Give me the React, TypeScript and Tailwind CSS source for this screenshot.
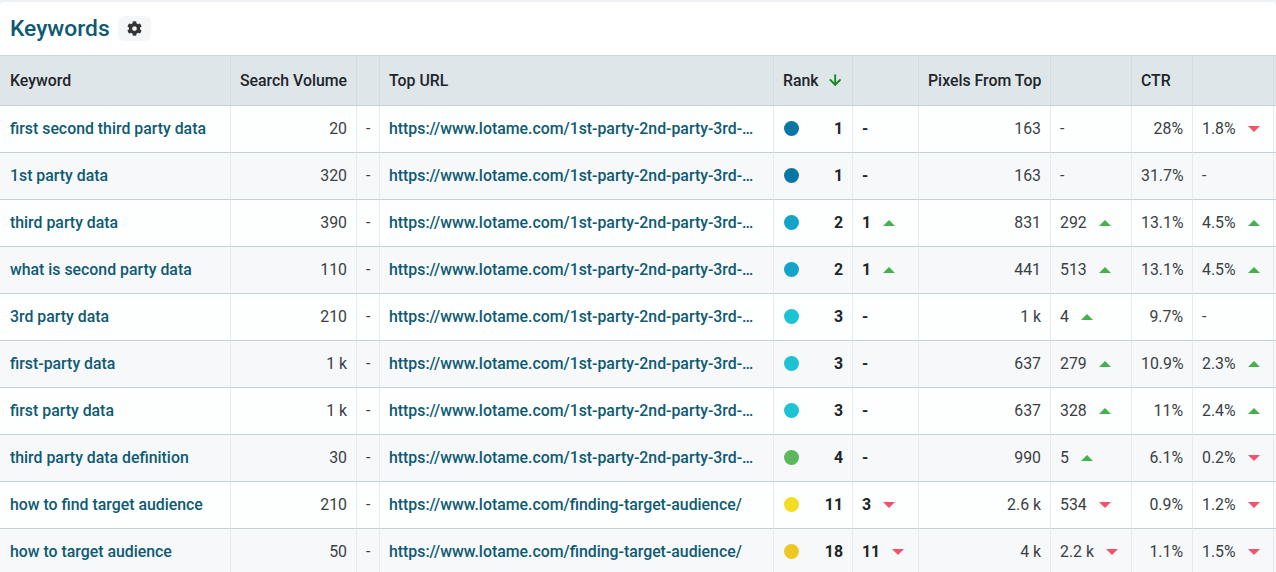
import React from 'react';
import { FaCog } from 'react-icons/fa';
import { ArrowDown } from 'lucide-react';

const LONG_URL = 'https://www.lotame.com/1st-party-2nd-party-3rd-party-data-what-is-it/';
const AUDIENCE_URL = 'https://www.lotame.com/finding-target-audience/';

type Delta = { v: string; dir?: 'up' | 'down' };

interface Row {
  keyword: string;
  volume: string;
  url: string;
  dot: string;
  rank: number;
  rankDelta: Delta;
  pixels: string;
  pixelsDelta: Delta;
  ctr: string;
  ctrDelta: Delta;
}

const rows: Row[] = [
  { keyword: 'first second third party data', volume: '20', url: LONG_URL, dot: 'bg-[#0b75a3]', rank: 1, rankDelta: { v: '-' }, pixels: '163', pixelsDelta: { v: '-' }, ctr: '28%', ctrDelta: { v: '1.8%', dir: 'down' } },
  { keyword: '1st party data', volume: '320', url: LONG_URL, dot: 'bg-[#0b75a3]', rank: 1, rankDelta: { v: '-' }, pixels: '163', pixelsDelta: { v: '-' }, ctr: '31.7%', ctrDelta: { v: '-' } },
  { keyword: 'third party data', volume: '390', url: LONG_URL, dot: 'bg-[#12a5c9]', rank: 2, rankDelta: { v: '1', dir: 'up' }, pixels: '831', pixelsDelta: { v: '292', dir: 'up' }, ctr: '13.1%', ctrDelta: { v: '4.5%', dir: 'up' } },
  { keyword: 'what is second party data', volume: '110', url: LONG_URL, dot: 'bg-[#12a5c9]', rank: 2, rankDelta: { v: '1', dir: 'up' }, pixels: '441', pixelsDelta: { v: '513', dir: 'up' }, ctr: '13.1%', ctrDelta: { v: '4.5%', dir: 'up' } },
  { keyword: '3rd party data', volume: '210', url: LONG_URL, dot: 'bg-[#1cc3d3]', rank: 3, rankDelta: { v: '-' }, pixels: '1 k', pixelsDelta: { v: '4', dir: 'up' }, ctr: '9.7%', ctrDelta: { v: '-' } },
  { keyword: 'first-party data', volume: '1 k', url: LONG_URL, dot: 'bg-[#1cc3d3]', rank: 3, rankDelta: { v: '-' }, pixels: '637', pixelsDelta: { v: '279', dir: 'up' }, ctr: '10.9%', ctrDelta: { v: '2.3%', dir: 'up' } },
  { keyword: 'first party data', volume: '1 k', url: LONG_URL, dot: 'bg-[#1cc3d3]', rank: 3, rankDelta: { v: '-' }, pixels: '637', pixelsDelta: { v: '328', dir: 'up' }, ctr: '11%', ctrDelta: { v: '2.4%', dir: 'up' } },
  { keyword: 'third party data definition', volume: '30', url: LONG_URL, dot: 'bg-[#5bb85d]', rank: 4, rankDelta: { v: '-' }, pixels: '990', pixelsDelta: { v: '5', dir: 'up' }, ctr: '6.1%', ctrDelta: { v: '0.2%', dir: 'down' } },
  { keyword: 'how to find target audience', volume: '210', url: AUDIENCE_URL, dot: 'bg-[#f2dd22]', rank: 11, rankDelta: { v: '3', dir: 'down' }, pixels: '2.6 k', pixelsDelta: { v: '534', dir: 'down' }, ctr: '0.9%', ctrDelta: { v: '1.2%', dir: 'down' } },
  { keyword: 'how to target audience', volume: '50', url: AUDIENCE_URL, dot: 'bg-[#efc724]', rank: 18, rankDelta: { v: '11', dir: 'down' }, pixels: '4 k', pixelsDelta: { v: '2.2 k', dir: 'down' }, ctr: '1.1%', ctrDelta: { v: '1.5%', dir: 'down' } },
];

const Triangle = ({ dir }: { dir: 'up' | 'down' }) => (
  <svg width="12" height="6" viewBox="0 0 12 6" className="shrink-0">
    {dir === 'up' ? (
      <polygon points="6,0 12,6 0,6" fill="#46b04f" />
    ) : (
      <polygon points="0,0 12,0 6,6" fill="#f7506a" />
    )}
  </svg>
);

const DeltaValue = ({ delta, bold }: { delta: Delta; bold?: boolean }) => (
  <div className={`flex items-center gap-[12px] ${bold ? 'font-bold text-[#212529]' : ''}`}>
    <span>{delta.v}</span>
    {delta.dir && <Triangle dir={delta.dir} />}
  </div>
);

const th = 'h-[51px] px-[9px] text-left font-medium whitespace-nowrap text-[#212529] border-t border-b border-r border-t-[#ccd8dc] border-b-[#c3d1d6] border-r-[#d3dde0]';
const td = 'h-[47px] px-[9px] border-b border-r border-b-[#c3d1d6] border-r-[#e6ecee]';

export default function App() {
  return (
    <div className="w-[1276px] h-[572px] overflow-hidden bg-[#edf1f4] pt-[2px] font-['Roboto',sans-serif]">
      <div className="bg-white rounded-t-[4px]">
        <div className="h-[53px] flex items-center pl-[10px]">
          <h2 className="text-[22.8px] font-medium text-[#0e5a72] pt-[2px]">Keywords</h2>
          <button className="ml-[8px] w-[33px] h-[25px] rounded-[6px] bg-[#f5f6f8] flex items-center justify-center text-[#343434]">
            <FaCog size={15} />
          </button>
        </div>
        <table className="table-fixed border-separate border-spacing-0 w-[1276px] text-[15.85px] text-[#3b3f44]">
          <colgroup>
            <col className="w-[231px]" />
            <col className="w-[126px]" />
            <col className="w-[23px]" />
            <col className="w-[394px]" />
            <col className="w-[79px]" />
            <col className="w-[66px]" />
            <col className="w-[132px]" />
            <col className="w-[81px]" />
            <col className="w-[61px]" />
            <col className="w-[81px]" />
            <col className="w-[2px]" />
          </colgroup>
          <thead>
            <tr className="bg-[#dfe6e9]">
              <th className={`${th} pl-[10px]`}>Keyword</th>
              <th className={th}>Search Volume</th>
              <th className={th}></th>
              <th className={th}>Top URL</th>
              <th className={th}>
                <div className="flex items-center gap-[8px]">
                  Rank
                  <ArrowDown size={18} strokeWidth={2.75} className="text-[#178a1c]" />
                </div>
              </th>
              <th className={th}></th>
              <th className={th}>Pixels From Top</th>
              <th className={th}></th>
              <th className={th}>CTR</th>
              <th className={th}></th>
              <th className="border-t border-b border-t-[#ccd8dc] border-b-[#c3d1d6]"></th>
            </tr>
          </thead>
          <tbody>
            {rows.map((row, i) => (
              <tr key={row.keyword} className={i % 2 === 0 ? 'bg-[#fdfefe]' : 'bg-[#f6f8fa]'}>
                <td className={`${td} pl-[10px] font-medium text-[#0e5a72]`}>{row.keyword}</td>
                <td className={`${td} text-right`}>{row.volume}</td>
                <td className={`${td} text-center`}>-</td>
                <td className={`${td} pr-[17px] font-medium text-[#0e5a72] truncate`}>{row.url}</td>
                <td className={td}>
                  <div className="flex items-center justify-between pl-px">
                    <span className={`w-[15px] h-[15px] rounded-full ${row.dot}`} />
                    <span className="font-bold text-[#212529]">{row.rank}</span>
                  </div>
                </td>
                <td className={td}><DeltaValue delta={row.rankDelta} bold /></td>
                <td className={`${td} text-right`}>{row.pixels}</td>
                <td className={td}><DeltaValue delta={row.pixelsDelta} /></td>
                <td className={`${td} text-right`}>{row.ctr}</td>
                <td className={td}><DeltaValue delta={row.ctrDelta} /></td>
                <td className="border-b border-b-[#c3d1d6]"></td>
              </tr>
            ))}
          </tbody>
        </table>
      </div>
    </div>
  );
}
